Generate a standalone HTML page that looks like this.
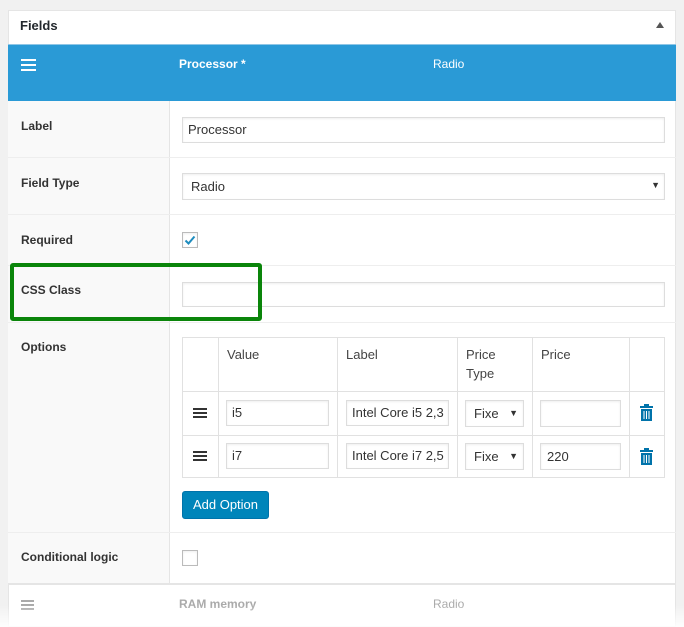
<!DOCTYPE html>
<html><head><meta charset="utf-8"><style>
*{box-sizing:border-box;margin:0;padding:0}
body{width:684px;height:627px;background:#f1f1f1;font-family:"Liberation Sans",sans-serif;position:relative;overflow:hidden;color:#32373c}
.a{position:absolute}
.panel{left:8px;top:10px;width:668px;height:617px;background:#fff;border:1px solid #e5e5e5}
.lbl{font-size:12px;font-weight:bold;color:#333;left:21px}
.inp{background:#fff;border:1px solid #ddd;box-shadow:inset 0 1px 2px rgba(0,0,0,.07);font-size:13px;color:#333}
.hl{background:#eee;height:1px;left:8px;width:668px}
.th{font-size:13px;color:#444}
.ham{width:14px;height:2px;background:#333;box-shadow:0 4px 0 #333,0 8px 0 #333}
</style></head><body>
<div class="a panel"></div>
<div class="a" style="left:20px;top:18px;font-size:13px;font-weight:bold;color:#23282d">Fields</div>
<div class="a" style="left:656px;top:22px;width:0;height:0;border-left:4px solid transparent;border-right:4px solid transparent;border-bottom:6px solid #555"></div>
<div class="a" style="left:8px;top:44px;width:668px;height:57px;background:#2a9ad6;border-top:1px solid #8fc6e6"></div>
<div class="a" style="left:21px;top:59px;width:15px;height:2px;background:#fff;box-shadow:0 5px 0 #fff,0 10px 0 #fff"></div>
<div class="a" style="left:179px;top:57px;color:#fff;font-size:12px;font-weight:bold">Processor *</div>
<div class="a" style="left:433px;top:57px;color:#fff;font-size:12px">Radio</div>
<div class="a" style="left:8px;top:101px;width:162px;height:482px;background:#f9f9f9;border-right:1px solid #e5e5e5"></div>
<div class="a hl" style="top:157px"></div>
<div class="a hl" style="top:214px"></div>
<div class="a hl" style="top:265px"></div>
<div class="a hl" style="top:322px"></div>
<div class="a hl" style="top:532px"></div>
<div class="a" style="left:8px;top:583px;width:668px;height:2px;background:#e5e5e5"></div>
<div class="a lbl" style="top:119px">Label</div>
<div class="a lbl" style="top:176px">Field Type</div>
<div class="a lbl" style="top:233px">Required</div>
<div class="a lbl" style="top:283px">CSS Class</div>
<div class="a lbl" style="top:340px">Options</div>
<div class="a lbl" style="top:550px">Conditional logic</div>
<div class="a inp" style="left:182px;top:117px;width:483px;height:26px;padding:4px 5px">Processor</div>
<div class="a inp" style="left:182px;top:173px;width:483px;height:27px;padding:5px 8px">Radio<span style="position:absolute;right:4px;top:6px;font-size:9px">▼</span></div>
<div class="a inp" style="left:182px;top:232px;width:16px;height:16px;border-color:#bbb"><svg width="14" height="14" viewBox="0 0 14 14" style="position:absolute;left:0;top:0"><path d="M2.5 7.5l3 3 6-7" stroke="#1e8cbe" stroke-width="2" fill="none"/></svg></div>
<div class="a inp" style="left:182px;top:282px;width:483px;height:25px"></div>
<div class="a" style="left:182px;top:337px;width:483px;height:141px;border:1px solid #e1e1e1"></div>
<div class="a" style="left:182px;top:391px;width:483px;height:1px;background:#e1e1e1"></div>
<div class="a" style="left:182px;top:435px;width:483px;height:1px;background:#e1e1e1"></div>
<div class="a" style="left:218px;top:337px;width:1px;height:141px;background:#e1e1e1"></div>
<div class="a" style="left:337px;top:337px;width:1px;height:141px;background:#e1e1e1"></div>
<div class="a" style="left:457px;top:337px;width:1px;height:141px;background:#e1e1e1"></div>
<div class="a" style="left:532px;top:337px;width:1px;height:141px;background:#e1e1e1"></div>
<div class="a" style="left:629px;top:337px;width:1px;height:141px;background:#e1e1e1"></div>
<div class="a th" style="left:227px;top:347px">Value</div>
<div class="a th" style="left:346px;top:347px">Label</div>
<div class="a th" style="left:466px;line-height:19px;top:345px">Price<br>Type</div>
<div class="a th" style="left:541px;top:347px">Price</div>
<div class="a ham" style="left:193px;top:408px"></div>
<div class="a ham" style="left:193px;top:451px"></div>
<div class="a inp" style="left:226px;top:400px;width:103px;height:26px;padding:4px 5px">i5</div>
<div class="a inp" style="left:226px;top:443px;width:103px;height:26px;padding:4px 5px">i7</div>
<div class="a inp" style="left:346px;top:400px;width:103px;height:26px;padding:4px 5px;overflow:hidden;white-space:nowrap">Intel Core i5 2,3</div>
<div class="a inp" style="left:346px;top:443px;width:103px;height:26px;padding:4px 5px;overflow:hidden;white-space:nowrap">Intel Core i7 2,5</div>
<div class="a inp" style="left:465px;top:400px;width:59px;height:27px;padding:5px 8px">Fixe<span style="position:absolute;right:5px;top:7px;font-size:9px">▼</span></div>
<div class="a inp" style="left:465px;top:443px;width:59px;height:27px;padding:5px 8px">Fixe<span style="position:absolute;right:5px;top:7px;font-size:9px">▼</span></div>
<div class="a inp" style="left:540px;top:400px;width:81px;height:27px"></div>
<div class="a inp" style="left:540px;top:443px;width:81px;height:27px;padding:5px 6px">220</div>
<svg class="a" style="left:640px;top:404px" width="13" height="17" viewBox="0 0 13 17"><rect x="0" y="2" width="13" height="2" fill="#0073aa"/><rect x="4" y="0" width="5" height="3" fill="#0073aa"/><path d="M1 5h11v12H1z" fill="#0073aa"/><path d="M4 7v8M6.5 7v8M9 7v8" stroke="#fff" stroke-width="1"/></svg>
<svg class="a" style="left:640px;top:448px" width="13" height="17" viewBox="0 0 13 17"><rect x="0" y="2" width="13" height="2" fill="#0073aa"/><rect x="4" y="0" width="5" height="3" fill="#0073aa"/><path d="M1 5h11v12H1z" fill="#0073aa"/><path d="M4 7v8M6.5 7v8M9 7v8" stroke="#fff" stroke-width="1"/></svg>
<div class="a" style="left:182px;top:491px;width:87px;height:28px;background:#0085ba;border:1px solid #0073aa;border-radius:3px;color:#fff;font-size:13px;text-align:center;line-height:26px">Add Option</div>
<div class="a inp" style="left:182px;top:550px;width:16px;height:16px;border-color:#bbb"></div>
<div class="a" style="left:21px;top:600px;width:13px;height:2px;background:#aaa;box-shadow:0 4px 0 #aaa,0 8px 0 #aaa"></div>
<div class="a" style="left:179px;top:597px;font-size:12px;font-weight:bold;color:#aaa">RAM memory</div>
<div class="a" style="left:433px;top:597px;font-size:12px;color:#aaa">Radio</div>
<div class="a" style="left:0;top:605px;width:684px;height:22px;background:linear-gradient(rgba(255,255,255,0),rgba(255,255,255,.9))"></div>
<div class="a" style="left:10px;top:263px;width:252px;height:58px;border:4px solid #0a850a;border-radius:3px"></div>
</body></html>
